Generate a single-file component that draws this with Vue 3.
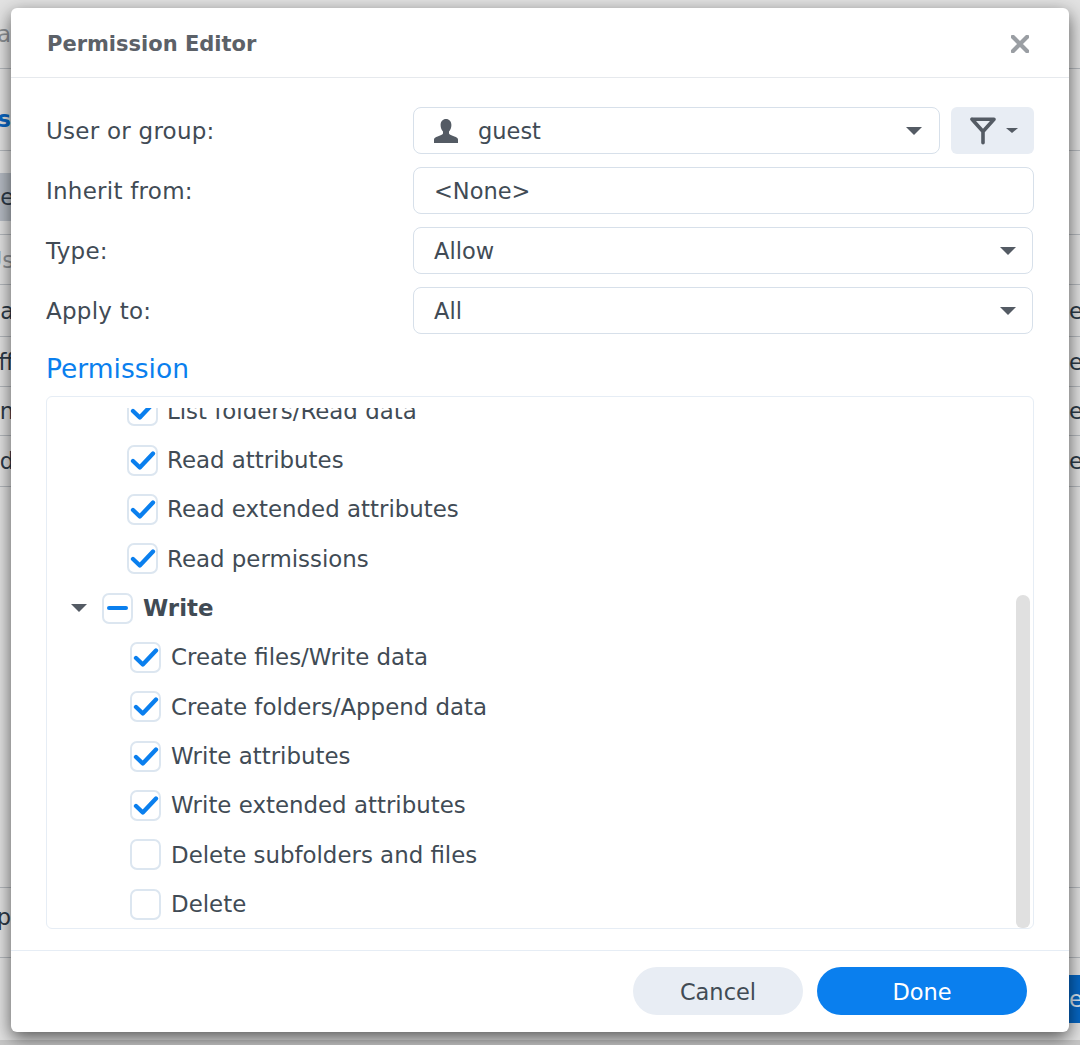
<script setup>
const backRows = [
  { h: 69, left: 'a', right: '', tone: 'muted' },
  { h: 82, left: 's', right: '', tone: 'link' },
  { h: 84, left: 'e', right: '', tone: 'selected clip' },
  { h: 50, left: 'Us', right: '', tone: 'muted clip' },
  { h: 52, left: 'na', right: 'e', tone: 'clip' },
  { h: 50, left: 'ff', right: 'e', tone: 'clip' },
  { h: 49, left: 'in', right: 'e', tone: 'clip' },
  { h: 51, left: 'd', right: 'e', tone: 'clip' },
  { h: 401, left: '', right: '', tone: '' },
  { h: 70, left: 'p', right: '', tone: 'lifted' }
]

const rows = [
  { id: 1, label: 'List folders/Read data', level: 'read', state: 'on' },
  { id: 2, label: 'Read attributes', level: 'read', state: 'on' },
  { id: 3, label: 'Read extended attributes', level: 'read', state: 'on' },
  { id: 4, label: 'Read permissions', level: 'read', state: 'on' },
  { id: 5, label: 'Write', level: 'group', state: 'mixed' },
  { id: 6, label: 'Create files/Write data', level: 'write', state: 'on' },
  { id: 7, label: 'Create folders/Append data', level: 'write', state: 'on' },
  { id: 8, label: 'Write attributes', level: 'write', state: 'on' },
  { id: 9, label: 'Write extended attributes', level: 'write', state: 'on' },
  { id: 10, label: 'Delete subfolders and files', level: 'write', state: 'off' },
  { id: 11, label: 'Delete', level: 'write', state: 'off' }
]
</script>

<template>
  <div class="page">
    <div class="backdrop">
      <div
        v-for="(r, i) in backRows"
        :key="i"
        class="back-row"
        :class="r.tone"
        :style="{ height: r.h + 'px' }"
      >
        <div class="back-left"><span>{{ r.left }}</span></div>
        <div class="back-right"><span>{{ r.right }}</span></div>
      </div>
      <div class="back-footer">
        <div class="back-btn">e</div>
      </div>
      <div class="back-edge"></div>
    </div>

    <div class="modal">
      <header class="head">
        <h1 class="title">Permission Editor</h1>
        <svg class="close" viewBox="0 0 18 18" width="18" height="18">
          <path d="M1.800 1.800 L16.200 16.200 M16.200 1.800 L1.800 16.200" fill="none" stroke="currentColor" stroke-width="4.200" stroke-linecap="round" />
        </svg>
      </header>

      <div class="body">
        <div class="form">
          <div class="field">
            <label class="lab">User or group:</label>
            <div class="controls">
              <div class="box grow">
                <svg class="person" viewBox="0 0 24 24" width="24" height="24">
                  <path d="M12 0c3.200 0 5.400 2.400 5.400 6 0 2.800-1 5-2.400 6.400v2.200c0 1.200 3 2 5.400 3 2 .8 3.600 1.600 3.600 3V24H0v-3.400c0-1.400 1.600-2.200 3.600-3 2.400-1 5.400-1.800 5.400-3v-2.200C7.600 11 6.600 8.800 6.600 6c0-3.600 2.200-6 5.400-6z" fill="#545b64" />
                </svg>
                <span class="val guest">guest</span>
                <i class="caret"></i>
              </div>
              <button class="filter">
                <svg viewBox="0 0 26 28" width="26" height="28">
                  <path d="M2 2.200H24L13 14.500V25.800M13 14.500L2 2.200" fill="none" stroke="#545b64" stroke-width="3.600" stroke-linecap="round" stroke-linejoin="round" />
                </svg>
                <i class="caret small"></i>
              </button>
            </div>
          </div>
          <div class="field">
            <label class="lab">Inherit from:</label>
            <div class="box"><span class="val">&lt;None&gt;</span></div>
          </div>
          <div class="field">
            <label class="lab">Type:</label>
            <div class="box short"><span class="val">Allow</span><i class="caret"></i></div>
          </div>
          <div class="field">
            <label class="lab">Apply to:</label>
            <div class="box short"><span class="val">All</span><i class="caret"></i></div>
          </div>
        </div>

        <h2 class="section">Permission</h2>

        <div class="tree">
          <div class="tree-clip">
            <div class="tree-inner">
              <div v-for="r in rows" :key="r.id" class="row" :class="r.level">
                <i v-if="r.level === 'group'" class="caret tree-caret"></i>
                <span class="check">
                  <svg v-if="r.state === 'on'" viewBox="0 0 26 22" width="26" height="22">
                    <path d="M3 11L9.800 17.500L23 3.500" fill="none" stroke="#0a7fee" stroke-width="4.300" stroke-linecap="round" stroke-linejoin="round" />
                  </svg>
                  <span v-else-if="r.state === 'mixed'" class="dash"></span>
                </span>
                <span class="row-text">{{ r.label }}</span>
              </div>
            </div>
          </div>
          <div class="thumb"></div>
        </div>
      </div>

      <footer class="foot">
        <button class="btn cancel">Cancel</button>
        <button class="btn done">Done</button>
      </footer>
    </div>
  </div>
</template>

<style scoped>
.page {
  position: relative;
  width: 1080px;
  height: 1045px;
  overflow: hidden;
  background: #e2e2e2;
  font-family: "DejaVu Sans", sans-serif;
  color: #414b55;
}
.backdrop {
  display: flex;
  flex-direction: column;
  height: 100%;
  font-size: 22.5px;
  color: #2d3a48;
}
.back-row {
  display: flex;
  flex: none;
  justify-content: space-between;
  align-items: center;
  box-sizing: border-box;
  border-bottom: 1px solid #b4b8bd;
}
.back-row.muted { color: #8d9195; }
.back-row.link { color: #0a66c2; font-weight: 700; padding-top: 18px; }
.back-row.selected { padding-top: 8px; }
.back-row.lifted { padding-bottom: 12px; }
.back-left {
  display: flex;
  justify-content: flex-end;
  width: 11px;
  overflow: hidden;
}
.back-left span { flex: none; }
.back-row.clip .back-left span { margin-right: -3px; }
.back-right {
  width: 11px;
  overflow: hidden;
  text-align: left;
}
.back-row.selected .back-left { background: #b6bcc4; height: 48px; align-items: center; }
.back-footer {
  display: flex;
  justify-content: flex-end;
  padding-top: 17px;
}
.back-btn {
  width: 11px;
  height: 48px;
  background: #0667c4;
  color: #dbe6f1;
  line-height: 48px;
  overflow: hidden;
}
.back-edge {
  flex: none;
  height: 5px;
  margin-top: auto;
  background: #c8c8c8;
}
.modal {
  position: absolute;
  left: 11px;
  top: 8px;
  width: 1058px;
  height: 1024px;
  display: flex;
  flex-direction: column;
  background: #fff;
  border-radius: 6px;
  box-shadow: 0 6px 18px rgba(0, 0, 0, 0.62);
}
.head {
  flex: none;
  box-sizing: border-box;
  height: 70px;
  padding: 2px 40px 0 36px;
  display: flex;
  align-items: center;
  justify-content: space-between;
  border-bottom: 1px solid #e6e9ed;
}
.title {
  margin: 0;
  font-size: 21px;
  font-weight: 700;
  color: #5c6168;
}
.close { color: #9a9ea3; }
.body {
  flex: 1;
  min-height: 0;
  padding: 29px 35px 21px;
  display: flex;
  flex-direction: column;
}
.form {
  display: flex;
  flex-direction: column;
  gap: 13px;
}
.field {
  display: flex;
  align-items: center;
  height: 47px;
}
.lab {
  flex: none;
  width: 367px;
  font-size: 23px;
  letter-spacing: 0.25px;
  padding-top: 1px;
}
.controls {
  flex: 1;
  display: flex;
  gap: 11px;
  height: 100%;
}
.box {
  flex: 1;
  box-sizing: border-box;
  height: 47px;
  display: flex;
  align-items: center;
  border: 1px solid #d7e0ea;
  border-radius: 8px;
  padding: 0 16px 0 20px;
}
.box.grow { padding-right: 17px; }
.box.short { margin-right: 1px; }
.person { flex: none; margin-right: 20px; }
.val { flex: 1; font-size: 22.5px; }
.caret {
  flex: none;
  width: 0;
  height: 0;
  border-left: 8px solid transparent;
  border-right: 8px solid transparent;
  border-top: 8px solid #545b64;
}
.caret.small {
  border-left-width: 6px;
  border-right-width: 6px;
  border-top-width: 5px;
}
.filter {
  flex: none;
  width: 83px;
  height: 47px;
  border: 0;
  padding: 0 0 0 19px;
  border-radius: 6px;
  background: #e8edf4;
  display: flex;
  align-items: center;
  gap: 10px;
}
.section {
  margin: 17px 0 9px;
  font-size: 26.500px;
  font-weight: 400;
  line-height: 36px;
  color: #0a7fee;
}
.tree {
  position: relative;
  flex: none;
  height: 533px;
  box-sizing: border-box;
  padding-top: 11px;
  display: flex;
  flex-direction: column;
  border: 1px solid #e6edf5;
  border-radius: 6px;
  overflow: hidden;
}
.tree-clip {
  flex: 1;
  min-height: 0;
  overflow: hidden;
}
.tree-inner {
  margin-top: -22px;
  display: flex;
  flex-direction: column;
}
.row {
  flex: none;
  height: 49.350px;
  display: flex;
  align-items: center;
  font-size: 22.900px;
}
.row.read { padding-left: 80px; }
.row.write { padding-left: 83px; }
.row.group { padding-left: 24px; font-weight: 700; }
.tree-caret { margin-right: 15px; }
.check {
  flex: none;
  box-sizing: border-box;
  width: 31px;
  height: 31px;
  margin-right: 9px;
  display: flex;
  align-items: center;
  justify-content: center;
  border: 2px solid #dce6f0;
  border-radius: 7px;
  background: #fff;
}
.row.group .check,
.row.write .check { margin-right: 10px; }
.check svg { margin-top: 1px; }
.dash {
  width: 21px;
  height: 3.500px;
  border-radius: 2px;
  background: #0a7fee;
}
.thumb {
  position: absolute;
  right: 3px;
  top: 198px;
  bottom: 0;
  width: 14px;
  border-radius: 7px 7px 6px 6px;
  background: #e0e0e0;
}
.foot {
  flex: none;
  box-sizing: border-box;
  height: 82px;
  padding: 16px 42px 0 0;
  display: flex;
  justify-content: flex-end;
  gap: 14px;
  border-top: 1px solid #e6edf5;
}
.btn {
  height: 48px;
  border: 0;
  padding: 2px 0 0;
  border-radius: 24px;
  font-family: inherit;
  font-size: 22.500px;
}
.cancel { width: 170px; background: #e8edf4; color: #414b55; }
.done { width: 210px; background: #0a7fee; color: #fff; }
</style>
